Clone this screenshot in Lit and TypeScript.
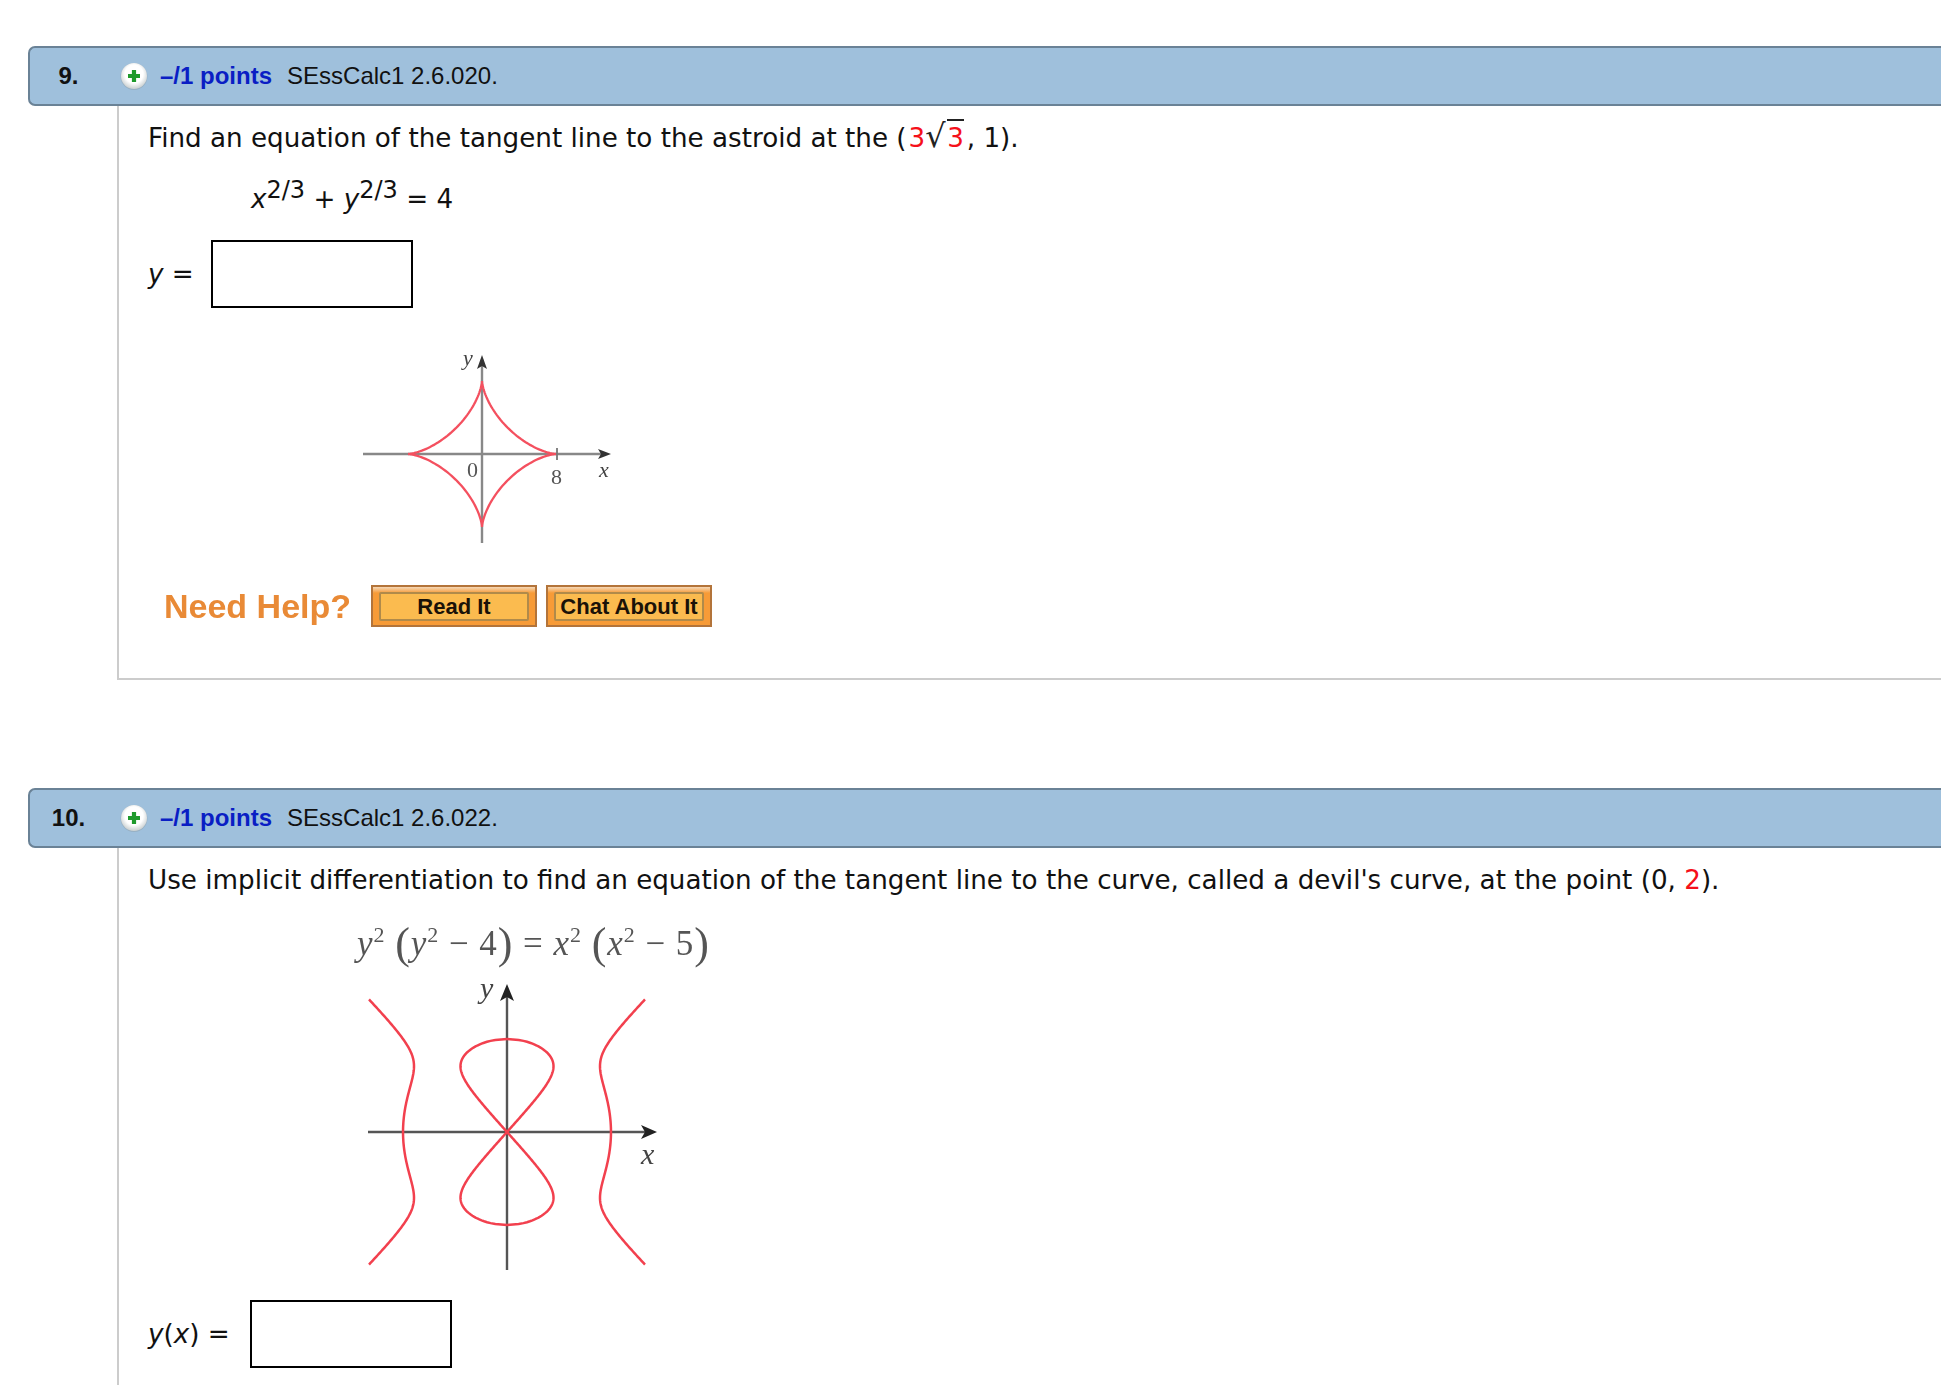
import { LitElement, html, css, svg } from "lit";
import { customElement } from "lit/decorators.js";

function astroidPoints(cx: number, cy: number, a: number, b: number): string {
  const pts: string[] = [];
  for (let i = 0; i <= 240; i++) {
    const t = (i / 240) * Math.PI * 2;
    pts.push(`${(cx + a * Math.cos(t) ** 3).toFixed(2)},${(cy + b * Math.sin(t) ** 3).toFixed(2)}`);
  }
  return pts.join(" ");
}

function devilBranch(cx: number, cy: number, u: number, sign: number, side: number, ymax: number): string {
  const pts: string[] = [];
  for (let i = 0; i <= 200; i++) {
    const y = -ymax + (2 * ymax * i) / 200;
    const disc = Math.max(0, 25 + 4 * y * y * (y * y - 4));
    const x2 = Math.max(0, (5 + sign * Math.sqrt(disc)) / 2);
    const x = side * Math.sqrt(x2);
    pts.push(`${(cx + x * u).toFixed(2)},${(cy - y * u).toFixed(2)}`);
  }
  return pts.join(" ");
}

@customElement("app-root")
export class AppRoot extends LitElement {
  static styles = css`
    :host {
      display: block;
      box-sizing: border-box;
      min-height: 1385px;
      padding: 46px 0 0 28px;
      background: #fff;
      font-family: "DejaVu Sans", sans-serif;
      font-size: 26.2px;
      color: #111;
    }
    .head {
      box-sizing: border-box;
      height: 60px;
      display: flex;
      align-items: center;
      background: #9fc0dc;
      border: 2px solid #6a8296;
      border-right: 0;
      border-radius: 7px 0 0 7px;
      font-family: "Liberation Sans", Arial, sans-serif;
      font-size: 24px;
      line-height: 30px;
      color: #111;
    }
    .num { width: 77px; text-align: center; font-weight: 700; }
    .plus { width: 28px; height: 28px; margin-left: 13px; flex: none; display: block; }
    .pts { margin-left: 12px; font-weight: 700; color: #0a1ec4; }
    .code { margin-left: 15px; }
    .body {
      margin-left: 89px;
      border-left: 2px solid #ccc;
      padding-left: 29px;
    }
    .first { border-bottom: 2px solid #ccc; padding-top: 14px; padding-bottom: 51px; }
    .second { margin-top: 108px; }
    .second .body { padding-top: 14px; padding-bottom: 17px; }
    .line { height: 36px; line-height: 36px; white-space: nowrap; }
    .red { color: #f5101a; }
    .lead { margin-left: 2px; }
    .root { font-size: 32px; line-height: 0; color: #222; margin-right: 1.5px; }
    .rad { position: relative; display: inline-block; margin-right: 3px; }
    .rad::before { content: ""; position: absolute; left: 0; right: 0; top: -1px; height: 2px; background: #222; }
    .eq { margin: 23px 0 0 103px; height: 40px; line-height: 40px; }
    sup { font-size: 24px; line-height: 0; vertical-align: 10px; }
    i { font-style: italic; }
    .ans { display: flex; align-items: center; height: 68px; }
    .box { box-sizing: border-box; width: 202px; height: 68px; border: 2px solid #000; background: #fff; }
    .a1 { margin-top: 21px; }
    .a1 .lbl { width: 63px; }
    .a2 { margin-top: 25px; }
    .a2 .lbl { width: 102px; }
    .graph { display: block; filter: blur(0.75px); }
    .g1 { margin: 32px 0 0 212px; }
    .g2 { margin: 1px 0 0 212px; }
    .help { display: flex; align-items: center; margin-top: 35px; padding-left: 16px; height: 42px; font-family: "Liberation Sans", Arial, sans-serif; }
    .need { width: 207px; font-size: 34px; font-weight: 700; color: #e98a36; filter: blur(0.5px); }
    .btn {
      box-sizing: border-box;
      width: 166px;
      height: 42px;
      margin-right: 9px;
      padding: 5px 6px 4px;
      background: linear-gradient(#f5d8b8 0, #f79b37 6px);
      border: 2px solid #b3743a;
    }
    .btn span {
      display: block;
      box-sizing: border-box;
      height: 100%;
      background: #fbbb4f;
      border: 2px solid #b08a4a;
      border-radius: 2px;
      text-align: center;
      font-size: 22px;
      font-weight: 700;
      line-height: 25px;
      color: #1a1208;
      white-space: nowrap;
    }
    .eq2 {
      margin: 21px 0 0 209px;
      height: 50px;
      line-height: 50px;
      white-space: nowrap;
      font-family: "Liberation Serif", serif;
      font-size: 35px;
      letter-spacing: 0.95px;
      color: #555;
      filter: blur(0.3px);
    }
    .eq2 sup { font-size: 22px; vertical-align: 13px; }
    .eq2 .p { font-size: 44px; font-weight: 400; vertical-align: -3px; }
    .gl { font-family: "Liberation Serif", serif; font-style: italic; fill: #444; }
    .gn { font-family: "Liberation Serif", serif; fill: #555; }
  `;

  private header(n: string, code: string) {
    const id = "g" + n.replace(".", "");
    return html`<div class="head">
      <span class="num">${n}</span>
      <svg class="plus" viewBox="0 0 28 28">
        <defs>
          <radialGradient id=${id} cx="50%" cy="42%" r="58%">
            <stop offset="0.6" stop-color="#ffffff"></stop>
            <stop offset="1" stop-color="#c9cfd0"></stop>
          </radialGradient>
        </defs>
        <circle cx="14" cy="14.5" r="13.4" fill="#8fa2ae" opacity="0.55"></circle>
        <circle cx="14" cy="14" r="13" fill="url(#${id})"></circle>
        <path d="M14 8v12M8 14h12" stroke="#1f9a2c" stroke-width="4.2" fill="none"></path>
      </svg>
      <span class="pts">–/1 points</span>
      <span class="code">${code}</span>
    </div>`;
  }

  private graph1() {
    return html`<svg class="graph g1" width="260" height="210" viewBox="360 340 260 210">
      <g fill="none">
        <path d="M363 454H602M482 359V543" stroke="#888" stroke-width="2.4"></path>
        <path d="M557 448V460" stroke="#777" stroke-width="1.8"></path>
        <polyline points=${astroidPoints(482, 454, 74, 73)} stroke="#f4505f" stroke-width="2.3"></polyline>
      </g>
      <path d="M611 454l-13-5 3 5-3 5zM482 355l-5 14 5-3 5 3z" fill="#333"></path>
      ${svg`<text class="gn" x="467" y="477" font-size="22">0</text>
      <text class="gn" x="551" y="484" font-size="22">8</text>
      <text class="gl" x="599" y="477" font-size="22">x</text>
      <text class="gl" x="463" y="365" font-size="22">y</text>`}
    </svg>`;
  }

  private graph2() {
    const cx = 507, cy = 1132, u = 46.5;
    return html`<svg class="graph g2" width="305" height="305" viewBox="360 970 305 305">
      <g fill="none">
        <path d="M368 1132H646M507 994V1270" stroke="#555" stroke-width="2.4"></path>
        ${[1, -1].map((s) => svg`
          <polyline points=${devilBranch(cx, cy, u, -1, s, 2)} stroke="#f2404e" stroke-width="2.5"></polyline>
          <polyline points=${devilBranch(cx, cy, u, 1, s, 2.85)} stroke="#f2404e" stroke-width="2.5"></polyline>
        `)}
      </g>
      <path d="M657 1132l-16-7 4 7-4 7zM507 984l-7 17 7-4 7 4z" fill="#222"></path>
      ${svg`<text class="gl" x="641" y="1164" font-size="30">x</text>
      <text class="gl" x="480" y="998" font-size="30">y</text>`}
    </svg>`;
  }

  render() {
    return html`
      <section>
        ${this.header("9.", "SEssCalc1 2.6.020.")}
        <div class="body first">
          <div class="line">Find an equation of the tangent line to the astroid at the (<span class="red lead">3</span><span class="root">√</span><span class="red rad">3</span>, 1).</div>
          <div class="line eq"><i>x</i><sup>2/3</sup> + <i>y</i><sup>2/3</sup> = 4</div>
          <div class="ans a1"><span class="lbl"><i>y</i> =</span><span class="box"></span></div>
          ${this.graph1()}
          <div class="help">
            <span class="need">Need Help?</span>
            <div class="btn"><span>Read It</span></div>
            <div class="btn"><span>Chat About It</span></div>
          </div>
        </div>
      </section>
      <section class="second">
        ${this.header("10.", "SEssCalc1 2.6.022.")}
        <div class="body">
          <div class="line">Use implicit differentiation to find an equation of the tangent line to the curve, called a devil's curve, at the point (0, <span class="red">2</span>).</div>
          <div class="eq2"><i>y</i><sup>2</sup> <span class="p">(</span><i>y</i><sup>2</sup> − 4<span class="p">)</span> = <i>x</i><sup>2</sup> <span class="p">(</span><i>x</i><sup>2</sup> − 5<span class="p">)</span></div>
          ${this.graph2()}
          <div class="ans a2"><span class="lbl"><i>y</i>(<i>x</i>) =</span><span class="box"></span></div>
        </div>
      </section>
    `;
  }
}
